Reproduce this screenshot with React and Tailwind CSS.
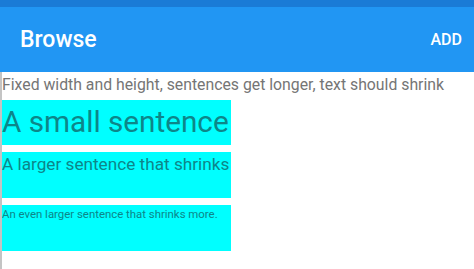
export default function App() {
  const font = { fontFamily: "Roboto, 'Noto Sans', sans-serif" };
  return (
    <div className="w-[474px] h-[269px] overflow-hidden bg-white flex flex-col" style={font}>
      <div className="h-[7px] bg-[#1a7bd6]" />
      <div className="h-[65px] bg-[#2196f3] flex items-center justify-between pl-[20px] pr-[12px]">
        <span className="text-white text-[23px] font-medium leading-none">Browse</span>
        <span className="text-white text-[16px] font-medium leading-none">ADD</span>
      </div>
      <div className="flex-1 flex">
        <div className="w-[2px] bg-[#c4c4c4]" />
        <div className="flex-1 flex flex-col">
          <div className="text-[#757575] text-[15.8px] leading-[22px] mt-[2px] whitespace-nowrap">
            Fixed width and height, sentences get longer, text should shrink
          </div>
          <div className="w-[229px] h-[45px] bg-[#00ffff] mt-[4px] text-[#0d8689] text-[29.7px] leading-[44px] whitespace-nowrap overflow-hidden">
            A small sentence
          </div>
          <div className="w-[229px] h-[46px] bg-[#00ffff] mt-[7px] text-[#0d8689] text-[17.2px] leading-[24px] whitespace-nowrap overflow-hidden">
            A larger sentence that shrinks
          </div>
          <div className="w-[229px] h-[46px] bg-[#00ffff] mt-[7px] text-[#0d8689] text-[11.4px] leading-[18px] whitespace-nowrap overflow-hidden">
            An even larger sentence that shrinks more.
          </div>
        </div>
      </div>
    </div>
  );
}
